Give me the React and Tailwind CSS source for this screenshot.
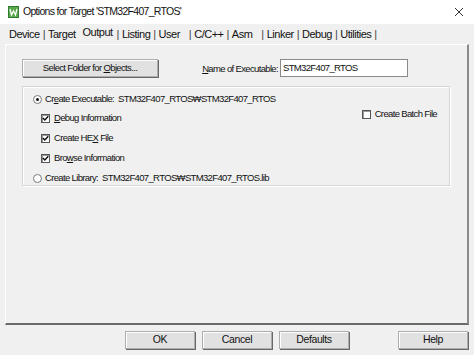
import React from "react";

const TABS = ["Device", "Target", "Output", "Listing", "User", "C/C++", "Asm", "Linker", "Debug", "Utilities"];

const Btn = ({ children, className = "" }) => (
  <div
    className={`h-[18px] flex items-center justify-center bg-[#e1e1e1] border border-[#adadad] shadow-[inset_1px_1px_0_#fff,1px_1px_0_#696969] ${className}`}
  >
    {children}
  </div>
);

const Check = ({ checked }) => (
  <span className="w-[9px] h-[9px] bg-white border border-[#555] shadow-[inset_1px_1px_0_#9a9a9a] flex items-center justify-center shrink-0">
    {checked && (
      <svg width="7" height="7" viewBox="0 0 7 7">
        <path d="M0.8 3 L2.8 5 L6.3 1.2" stroke="#111" strokeWidth="1.5" fill="none" />
      </svg>
    )}
  </span>
);

const Radio = ({ checked }) => (
  <span className="w-[9px] h-[9px] rounded-full bg-white border border-[#7a7a7a] flex items-center justify-center shrink-0">
    {checked && <span className="w-[3px] h-[3px] rounded-full bg-[#111]" />}
  </span>
);

export default function App() {
  return (
    <div className="w-[474px] h-[355px] bg-[#f0f0f0] flex flex-col text-[#111] font-['Liberation_Sans',Arial,sans-serif] text-[9.5px] tracking-[-0.65px] overflow-hidden">
      {/* title bar */}
      <div className="h-[24px] bg-white flex items-center pl-[8px] pr-[6px] shrink-0">
        <svg width="11" height="12" viewBox="0 0 11 12">
          <rect x="0" y="0" width="11" height="12" fill="#2f7d32" />
          <rect x="1" y="1" width="9" height="10" fill="#5aa84a" />
          <path d="M2 3 L3.5 9 L5.5 5 L7.5 9 L9 3" stroke="#fff" strokeWidth="1.3" fill="none" />
        </svg>
        <span className="ml-[4px] text-[10.5px] tracking-[-0.7px]">Options for Target 'STM32F407_RTOS'</span>
        <svg className="ml-auto mr-[4px]" width="10" height="10" viewBox="0 0 10 10">
          <path d="M1 1 L9 9 M9 1 L1 9" stroke="#333" strokeWidth="1" />
        </svg>
      </div>

      {/* tabs */}
      <div className="h-[20px] flex items-center pl-[9px] text-[11px] tracking-[-0.5px] shrink-0">
        {TABS.map((t) => (
          <React.Fragment key={t}>
            <span className={t === "Output" ? "-mt-[3px] px-[2px]" : ""}>{t}</span>
            {t !== "Target" && t !== "Output" && (
              <span className={`text-[#444] ${t === "User" || t === "Asm" ? "ml-[9px]" : "ml-[3px]"} mr-[3px]`}>|</span>
            )}
            {t === "Target" && <span className="w-[5px]" />}
            {t === "Output" && <span className="ml-[2px] mr-[3px] text-[#444]">|</span>}
          </React.Fragment>
        ))}
      </div>

      {/* panel */}
      <div className="mx-[5px] h-[281px] border-t border-l border-t-white border-l-white border-r-2 border-b-2 border-r-[#8a8a8a] border-b-[#6a6a6a] pl-[16px] pr-[14px] pt-[14px] shrink-0">
        <div className="flex items-center">
          <Btn className="w-[136px]">
            <span>
              Select Folder for <span className="underline">O</span>bjects...
            </span>
          </Btn>
          <span className="w-[122px] text-right pr-[2px] mt-[2px]">
            <span className="underline">N</span>ame of Executable:
          </span>
          <div className="w-[128px] h-[18px] bg-white border border-[#8a8a8a] flex items-center pl-[2px]">
            STM32F407_RTOS
          </div>
        </div>

        <div className="mt-[9px] w-[428px] h-[100px] border border-[#d5d5d5] shadow-[inset_1px_1px_0_#fff,1px_1px_0_#fff] pl-[10px] pr-[12px] pt-[6px] flex flex-col">
          <div className="flex items-center gap-[3px] h-[12px]">
            <Radio checked />
            <span>
              Cr<span className="underline">e</span>ate Executable:&nbsp; STM32F407_RTOS₩STM32F407_RTOS
            </span>
          </div>
          <div className="flex items-start mt-[5px]">
            <div className="flex flex-col pl-[8px] pt-[2px] gap-[8px]">
              <div className="flex items-center gap-[4px] h-[12px]">
                <Check checked />
                <span>
                  <span className="underline">D</span>ebug Information
                </span>
              </div>
              <div className="flex items-center gap-[4px] h-[12px]">
                <Check checked />
                <span>
                  Create HE<span className="underline">X</span> File
                </span>
              </div>
              <div className="flex items-center gap-[4px] h-[12px]">
                <Check checked />
                <span>
                  Bro<span className="underline">w</span>se Information
                </span>
              </div>
            </div>
            <div className="ml-auto flex items-center gap-[4px] h-[12px] -mt-[2px]">
              <Check />
              <span>Create Batch File</span>
            </div>
          </div>
          <div className="flex items-center gap-[3px] h-[12px] mt-[8px]">
            <Radio />
            <span>Create Library:&nbsp; STM32F407_RTOS₩STM32F407_RTOS.lib</span>
          </div>
        </div>
      </div>

      {/* bottom buttons */}
      <div className="flex items-center pl-[125px] pt-[6px] text-[10.5px] tracking-[-0.4px]">
        <Btn className="w-[70px]">OK</Btn>
        <Btn className="w-[70px] ml-[7px]">Cancel</Btn>
        <Btn className="w-[70px] ml-[7px]">Defaults</Btn>
        <Btn className="w-[70px] ml-[49px]">Help</Btn>
      </div>
    </div>
  );
}
